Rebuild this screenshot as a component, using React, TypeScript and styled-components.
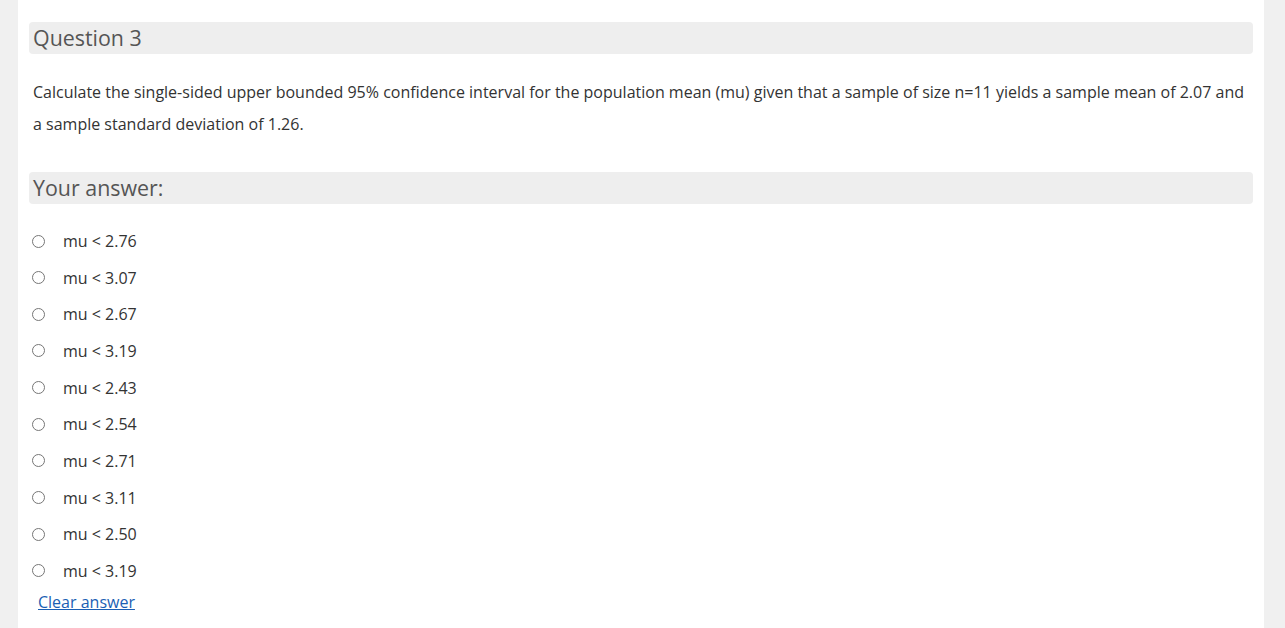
import React, { useState } from 'react';
import styled, { createGlobalStyle } from 'styled-components';

const GlobalStyle = createGlobalStyle`
  html, body {
    margin: 0;
    padding: 0;
    background: #f0f0f0;
    font-family: 'Open Sans', 'Liberation Sans', sans-serif;
  }
`;

const Page = styled.div`
  display: flex;
  padding: 0 21px 0 18px;
  min-height: 628px;
  box-sizing: border-box;
`;

const Panel = styled.main`
  flex: 1;
  background: #ffffff;
  padding: 22px 11px 0 11px;
`;

const SectionHeader = styled.h2`
  margin: 0;
  height: 32px;
  line-height: 32px;
  padding-left: 4px;
  background: #eeeeee;
  border-radius: 4px;
  font-size: 21.4px;
  font-weight: 400;
  color: #555555;
`;

const Prompt = styled.p`
  margin: 22px 0 32px;
  padding-left: 4px;
  font-size: 16px;
  line-height: 32px;
  color: #333333;
`;

const Options = styled.div`
  display: flex;
  flex-direction: column;
  margin-top: 18.7px;
`;

const Option = styled.label`
  display: flex;
  align-items: center;
  height: 36.67px;
  font-size: 16px;
  color: #333333;
  cursor: pointer;
`;

const Radio = styled.input`
  appearance: none;
  width: 13px;
  height: 13px;
  margin: 0 18px 0 3px;
  border: 1px solid #767676;
  border-radius: 50%;
  box-sizing: border-box;
  background: #fff;

  &:checked {
    border-color: #0075ff;
    box-shadow: inset 0 0 0 2px #fff;
    background: #0075ff;
  }
`;

const ClearLink = styled.a`
  display: inline-block;
  margin: 2px 0 0 9px;
  font-size: 16px;
  line-height: 22px;
  color: #1a5fb4;
  text-decoration: underline;
  cursor: pointer;
`;

const answers = ['2.76', '3.07', '2.67', '3.19', '2.43', '2.54', '2.71', '3.11', '2.50', '3.19'];

const App = () => {
  const [picked, setPicked] = useState<number | null>(null);

  return (
    <>
      <GlobalStyle />
      <Page>
        <Panel>
          <SectionHeader>Question 3</SectionHeader>
          <Prompt>
            Calculate the single-sided upper bounded 95% confidence interval for the population mean (mu) given that
            a sample of size n=11 yields a sample mean of 2.07 and a sample standard deviation of 1.26.
          </Prompt>
          <SectionHeader>Your answer:</SectionHeader>
          <Options>
            {answers.map((value, i) => (
              <Option key={i}>
                <Radio
                  type="radio"
                  name="q3"
                  checked={picked === i}
                  onChange={() => {
                    setPicked(i);
                  }}
                />
                mu &lt; {value}
              </Option>
            ))}
          </Options>
          <ClearLink
            onClick={() => {
              setPicked(null);
            }}
          >
            Clear answer
          </ClearLink>
        </Panel>
      </Page>
    </>
  );
};

export default App;
